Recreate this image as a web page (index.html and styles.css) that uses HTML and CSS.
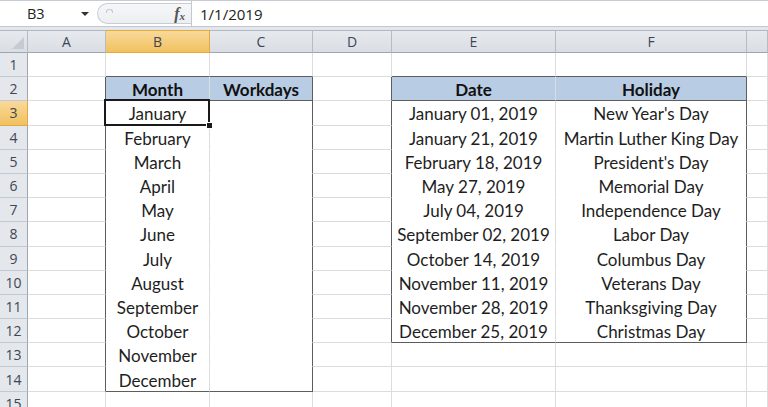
FILE: index.html
```html
<!DOCTYPE html>
<html lang="en">
<head>
    <meta charset="utf-8">
    <title>Workdays - Excel</title>
    <link rel="stylesheet" href="styles.css">
</head>
<body>
    <div class="formula-bar">
        <div class="name-box">
            <span class="cell-ref">B3</span>
            <span class="drop-arrow"></span>
        </div>
        <div class="fx-box">
            <span class="grip"></span>
            <span class="fx">f<sub>x</sub></span>
        </div>
        <div class="formula-input">1/1/2019</div>
    </div>
    <div class="bar-gap"></div>
    <div class="sheet" id="sheet"></div>

    <script>
        const sheet = document.getElementById('sheet');
        const letters = ['', 'A', 'B', 'C', 'D', 'E', 'F', ''];

        const months = ['January', 'February', 'March', 'April', 'May', 'June', 'July',
            'August', 'September', 'October', 'November', 'December'];

        const holidays = [
            ['January 01, 2019', "New Year's Day"],
            ['January 21, 2019', 'Martin Luther King Day'],
            ['February 18, 2019', "President's Day"],
            ['May 27, 2019', 'Memorial Day'],
            ['July 04, 2019', 'Independence Day'],
            ['September 02, 2019', 'Labor Day'],
            ['October 14, 2019', 'Columbus Day'],
            ['November 11, 2019', 'Veterans Day'],
            ['November 28, 2019', 'Thanksgiving Day'],
            ['December 25, 2019', 'Christmas Day']
        ];

        // tables: rows r1..r2, cols c1..c2 (col 1 = A)
        const tables = [
            { r1: 2, r2: 14, c1: 2, c2: 3 },
            { r1: 2, r2: 12, c1: 5, c2: 6 }
        ];

        function tableAt(r, c) {
            return tables.find(t => r >= t.r1 && r <= t.r2 && c >= t.c1 && c <= t.c2);
        }

        function valueAt(r, c) {
            if (r === 2 && c === 2) return 'Month';
            if (r === 2 && c === 3) return 'Workdays';
            if (r === 2 && c === 5) return 'Date';
            if (r === 2 && c === 6) return 'Holiday';
            if (c === 2 && r >= 3 && r <= 14) return months[r - 3];
            if (r >= 3 && r <= 12 && (c === 5 || c === 6)) return holidays[r - 3][c - 5];
            return '';
        }

        // column header row
        letters.forEach((l, c) => {
            const h = document.createElement('div');
            h.className = 'col-head' + (c === 0 ? ' corner' : '') + (c === 2 ? ' active' : '');
            h.textContent = l;
            sheet.appendChild(h);
        });

        for (let r = 1; r <= 15; r++) {
            const rh = document.createElement('div');
            rh.className = 'row-head' + (r === 3 ? ' active' : '');
            rh.textContent = r;
            sheet.appendChild(rh);

            for (let c = 1; c <= 7; c++) {
                const cell = document.createElement('div');
                cell.className = 'cell';
                const t = tableAt(r, c);
                const below = tableAt(r + 1, c);
                const right = tableAt(r, c + 1);

                if (t && (r === t.r2 || r === t.r1)) cell.classList.add('b-dark');
                else if (!t && below && r + 1 === below.r1) cell.classList.add('b-dark');
                else if (t) cell.classList.add('b-none');

                if (t && c === t.c2) cell.classList.add('r-dark');
                else if (!t && right) cell.classList.add('r-dark');

                if (t && r === t.r1) cell.classList.add('head');
                if (r === 3 && c === 2) cell.classList.add('selected');

                cell.textContent = valueAt(r, c);
                sheet.appendChild(cell);
            }
        }
    </script>
</body>
</html>
```

FILE: styles.css
```css
body {
    margin: 0;
    background-color: white;
    font-family: Lato, "Open Sans", sans-serif;
    overflow: hidden;
}

.formula-bar {
    display: flex;
    align-items: center;
    height: 25px;
    border-top: 1px solid #c6cbd3;
    border-bottom: 1px solid #c3c8d0;
    background-color: white;
}

.name-box {
    display: flex;
    align-items: center;
    width: 97px;
    height: 100%;
    box-sizing: border-box;
    padding-left: 27px;
}

.cell-ref {
    font-family: "Open Sans", sans-serif;
    font-size: 14.5px;
    color: #222;
    flex: 1;
}

.drop-arrow {
    width: 0;
    height: 0;
    border-left: 4px solid transparent;
    border-right: 4px solid transparent;
    border-top: 4px solid #333;
    margin-right: 8px;
}

.fx-box {
    display: flex;
    align-items: center;
    justify-content: space-between;
    width: 94px;
    height: 21px;
    box-sizing: border-box;
    border: 1px solid #c8ccd3;
    border-right: none;
    border-radius: 11px 0 0 11px;
    background: linear-gradient(#f6f7f9, #eceef1);
    padding: 0 6px 0 8px;
}

.grip {
    width: 5px;
    height: 3px;
    border-radius: 3px 3px 0 0;
    border: 1px solid #c4c8cf;
    border-bottom: none;
    margin-bottom: 5px;
}

.fx {
    font-family: "Liberation Serif", serif;
    font-style: italic;
    font-weight: bold;
    font-size: 16px;
    color: #555;
}

.fx sub {
    font-size: 11px;
    vertical-align: -1px;
}

.formula-input {
    flex: 1;
    height: 100%;
    border-left: 1px solid #c3c8d0;
    padding-left: 8px;
    font-family: "Open Sans", sans-serif;
    font-size: 15px;
    color: #222;
    display: flex;
    align-items: center;
}

.bar-gap {
    height: 3px;
    background-color: #e3e6ea;
}

.sheet {
    display: grid;
    grid-template-columns: 28px 78px 104px 103px 79px 164px 191px 21px;
    grid-template-rows: 23px repeat(15, 24.2px);
}

.col-head {
    background: linear-gradient(#e6e9ed, #dadee4);
    border-top: 1px solid #b1b7bf;
    border-bottom: 1px solid #9ea6b0;
    border-right: 1px solid #b6bcc4;
    box-sizing: border-box;
    display: flex;
    align-items: center;
    justify-content: center;
    font-family: "Open Sans", sans-serif;
    font-size: 14px;
    color: #3c4656;
}

.col-head.corner {
    position: relative;
}

.col-head.corner::after {
    content: "";
    position: absolute;
    right: 3px;
    bottom: 3px;
    width: 0;
    height: 0;
    border-left: 12px solid transparent;
    border-bottom: 12px solid #c6cbd1;
}

.col-head.active,
.row-head.active {
    background: linear-gradient(#f9d99b, #f1c15f);
    border-color: #e2a93d;
    color: #3c4656;
}

.row-head {
    background-color: #e4e7eb;
    border-bottom: 1px solid #c3c9d1;
    border-right: 1px solid #9ea6b0;
    box-sizing: border-box;
    display: flex;
    align-items: center;
    justify-content: center;
    font-family: "Open Sans", sans-serif;
    font-size: 14px;
    color: #3c4656;
}

.cell {
    border-right: 1px solid #dadcdf;
    border-bottom: 1px solid #dadcdf;
    box-sizing: border-box;
    display: flex;
    align-items: center;
    justify-content: center;
    padding-top: 2px;
    font-size: 17px;
    color: #1e1e1e;
    white-space: nowrap;
    overflow: visible;
}

.cell.b-none {
    border-bottom-color: white;
}

.cell.b-dark {
    border-bottom-color: #5d5d5d;
}

.cell.r-dark {
    border-right-color: #5d5d5d;
}

.cell.head {
    background-color: #b8cce4;
    font-weight: bold;
    color: #111;
}

.cell.selected {
    position: relative;
}

.cell.selected::after {
    content: "";
    position: absolute;
    left: -2px;
    top: -2px;
    right: -1px;
    bottom: -1px;
    border: 2px solid #1a1a1a;
}

.cell.selected::before {
    content: "";
    position: absolute;
    right: -4px;
    bottom: -4px;
    width: 5px;
    height: 5px;
    background-color: #1a1a1a;
    border: 1px solid white;
    z-index: 1;
}
```
